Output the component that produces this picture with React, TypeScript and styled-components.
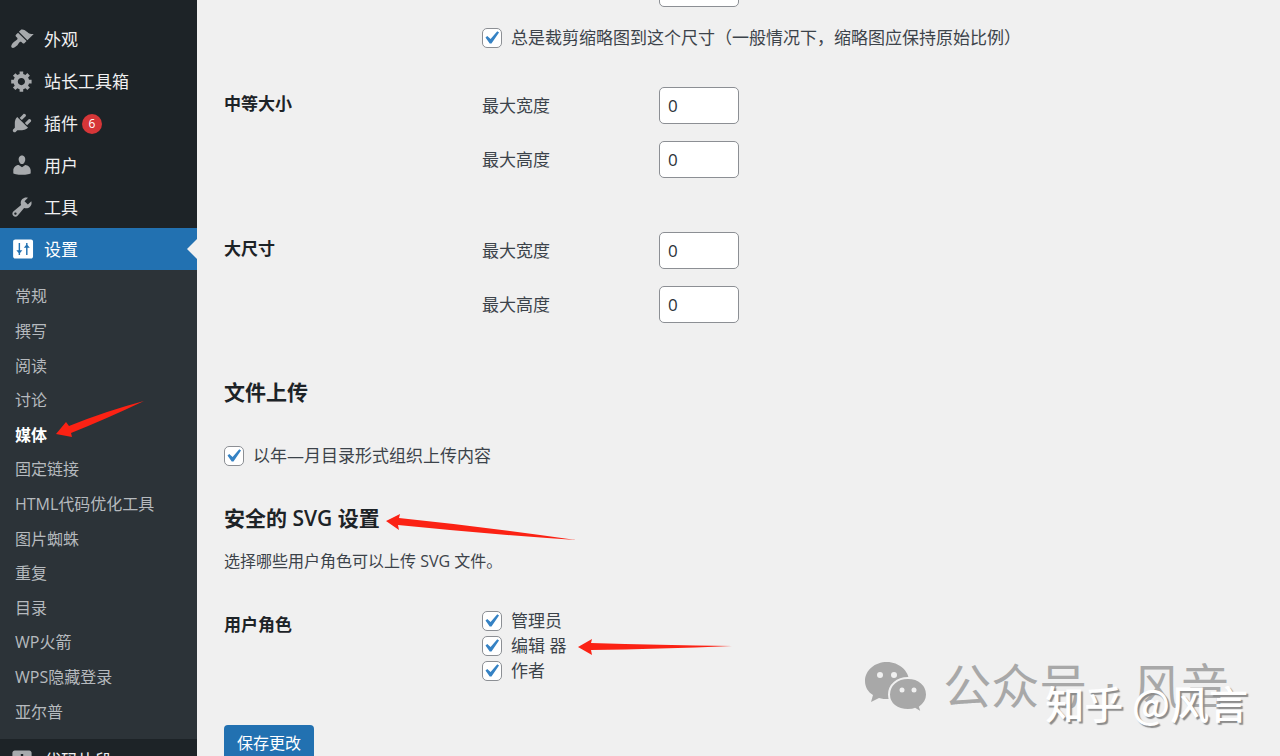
import React from "react";
import styled, { createGlobalStyle } from "styled-components";

const GlobalStyle = createGlobalStyle`
  *, *::before, *::after { box-sizing: border-box; }
  body {
    margin: 0;
    background: #f0f0f0;
    color: #3c434a;
    font-family: "Open Sans", "Noto Sans CJK SC", sans-serif;
    font-size: 17px;
    line-height: 24px;
  }
  input, button { font-family: inherit; }
`;

const Page = styled.div`
  position: relative;
  display: flex;
  height: 100vh;
  overflow: hidden;
`;

/* ---------- sidebar ---------- */

const Sidebar = styled.nav`
  flex: 0 0 197px;
  padding-top: 18px;
  background: #1d2327;
`;

const MenuList = styled.ul`
  margin: 0;
  padding: 0;
  list-style: none;
`;

const MenuLink = styled.a<{ $current?: boolean }>`
  position: relative;
  display: flex;
  align-items: center;
  gap: 10px;
  height: 42px;
  padding-left: 10px;
  color: ${(p) => (p.$current ? "#fff" : "#f0f0f1")};
  background: ${(p) => (p.$current ? "#2271b1" : "transparent")};
  text-decoration: none;
  line-height: 26px;
  white-space: nowrap;

  &::after {
    content: "";
    display: ${(p) => (p.$current ? "block" : "none")};
    position: absolute;
    right: 0;
    top: 11px;
    border: 10px solid transparent;
    border-left-width: 0;
    border-right-color: #f0f0f0;
  }
`;

const MenuIcon = styled.svg<{ $current?: boolean }>`
  flex: none;
  width: 24px;
  height: 24px;
  fill: ${(p) => (p.$current ? "#fff" : "#a7aaad")};
`;

const MenuText = styled.span`
  padding-top: 2px;
`;

const Badge = styled.span`
  width: 20px;
  height: 20px;
  margin: 2px 0 0 -6px;
  border-radius: 10px;
  background: #d63638;
  color: #fff;
  font-size: 12px;
  line-height: 20px;
  text-align: center;
`;

const SubMenu = styled.ul`
  display: grid;
  grid-auto-rows: 1fr;
  min-height: 469px;
  margin: 0;
  padding: 9px 0 10px;
  list-style: none;
  background: #2c3338;
`;

const SubItem = styled.li`
  position: relative;
  display: flex;
  align-items: center;
`;

const SubLink = styled.a<{ $current?: boolean }>`
  padding-left: 15px;
  color: ${(p) => (p.$current ? "#fff" : "#b6babe")};
  font-size: 16px;
  font-weight: ${(p) => (p.$current ? 700 : 400)};
  text-decoration: none;
  white-space: nowrap;
`;

/* ---------- settings form ---------- */

const Main = styled.main`
  flex: 1;
  min-width: 0;
  padding: 0 27px;
`;

/* The form is scrolled, so its first field is partly above the window. */
const Form = styled.form`
  margin-top: -30px;
`;

const FormRow = styled.section`
  display: grid;
  grid-template-columns: 258px 1fr;
  margin-bottom: 37px;
`;

const RowTitle = styled.h3`
  margin: 0;
  padding-top: 5px;
  color: #1d2327;
  font-size: 17px;
  font-weight: 700;
  line-height: 24px;
`;

const RowBody = styled.div`
  grid-column: 2;
`;

const Field = styled.div`
  display: grid;
  grid-template-columns: 177px 80px;
  align-items: center;
  margin-bottom: 17px;
`;

const NumberInput = styled.input`
  grid-column: 2;
  width: 80px;
  height: 37px;
  padding: 0 8px;
  border: 1px solid #8c8f94;
  border-radius: 5px;
  background: #fff;
  color: #2c3338;
  font-size: 17px;
`;

const CheckLabel = styled.label`
  position: relative;
  display: flex;
  align-items: center;
  gap: 9px;
  width: max-content;
  height: 25px;
`;

const CheckBox = styled.span`
  position: relative;
  display: block;
  width: 20px;
  height: 20px;

  input {
    display: block;
    appearance: none;
    width: 20px;
    height: 20px;
    margin: 0;
    border: 1px solid #8c8f94;
    border-radius: 5px;
    background: #fff;
  }
  svg {
    position: absolute;
    left: -4px;
    top: -3px;
    width: 26px;
    height: 26px;
    fill: #3582c4;
    pointer-events: none;
    visibility: hidden;
  }
  input:checked + svg { visibility: visible; }
`;

const CropOption = styled.div`
  padding-top: 1px;
`;

const SectionTitle = styled.h2`
  position: relative;
  width: max-content;
  margin: 35px 0 16px;
  color: #1d2327;
  font-size: 21px;
  font-weight: 700;
  line-height: 30px;
`;

const Latin = styled.span`
  font-weight: 600;
`;

const UploadOption = styled.div`
  padding-top: 20px;
`;

const Description = styled.p`
  margin: 0 0 35px;
  font-size: 16px;
`;

const SubmitButton = styled.button`
  height: 36px;
  margin-top: 5px;
  padding: 0 13px 2px;
  border: 0;
  border-radius: 4px;
  background: #2271b1;
  color: #fff;
  font-size: 16px;
`;

/* ---------- overlays ---------- */

const Arrow = styled.svg<{ $left: number; $top: number }>`
  position: absolute;
  left: ${(p) => p.$left}px;
  top: ${(p) => p.$top}px;
  z-index: 1;
  fill: #fb2214;
  pointer-events: none;
`;

const AccountMark = styled.div`
  position: absolute;
  right: 51px;
  bottom: 37px;
  display: flex;
  align-items: center;
  gap: 14px;
  color: #a8a8a8;
  font-family: "DejaVu Sans", "Noto Sans CJK SC", sans-serif;
  font-size: 48px;
  line-height: 64px;
  white-space: pre;
`;

const SiteMark = styled.div`
  position: absolute;
  right: 32px;
  bottom: 30px;
  color: #fff;
  font-family: "Noto Sans CJK SC", sans-serif;
  font-size: 39px;
  font-weight: 500;
  line-height: 48px;
  text-shadow: 2px 2px 1px #8c8c8c;
  white-space: pre;
`;

const icons = {
  brush:
    "M14.48 11.06L7.41 3.99l1.5-1.5c.5-.56 2.3-.47 3.51.32 1.21.8 1.43 1.28 2.91 2.1 1.18.64 2.45 1.26 4.45.85zm-.71.71L6.7 4.7 4.93 6.47c-.39.39-.39 1.02 0 1.41l1.06 1.06c.39.39.39 1.03 0 1.42-.6.6-1.43 1.11-2.21 1.69-.35.26-.7.53-1.01.84C1.43 14.23.4 16.08 1.4 17.07c.99 1 2.84-.03 4.18-1.36.31-.31.58-.66.85-1.02.57-.78 1.08-1.61 1.69-2.21.39-.39 1.02-.39 1.41 0l1.06 1.06c.39.39 1.02.39 1.41 0z",
  gear:
    "M18 12h-2.18c-.17.7-.44 1.35-.81 1.93l1.54 1.54-2.1 2.1-1.54-1.54c-.58.36-1.23.63-1.91.79V19H8v-2.18c-.68-.16-1.33-.43-1.91-.79l-1.54 1.54-2.12-2.12 1.54-1.54c-.36-.58-.63-1.23-.79-1.91H1V9.03h2.17c.16-.7.44-1.35.8-1.94L2.43 5.55l2.1-2.1 1.54 1.54c.58-.37 1.24-.64 1.93-.81V2h3v2.18c.68.16 1.33.43 1.91.79l1.54-1.54 2.12 2.12-1.54 1.54c.36.59.64 1.24.8 1.94H18V12zm-8.5 1.5c1.66 0 3-1.34 3-3s-1.34-3-3-3-3 1.34-3 3 1.34 3 3 3z",
  plug:
    "M13.11 4.36L9.87 7.6 8 5.73l3.24-3.24c.35-.34 1.05-.2 1.56.32.52.51.66 1.21.31 1.55zm-8 1.77l.91-1.12 9.01 9.01-1.19.84c-.71.71-2.63 1.16-3.82 1.16H6.14L4.9 17.26c-.59.59-1.54.59-2.12 0-.59-.58-.59-1.53 0-2.12l1.24-1.24v-3.88c0-1.13.4-3.19 1.09-3.89zm7.26 3.97l3.24-3.24c.34-.35 1.04-.21 1.55.31.52.51.66 1.21.31 1.55l-3.24 3.25z",
  user:
    "M10 9.25c-2.27 0-2.73-3.44-2.73-3.44C7 4.02 7.82 2 9.97 2c2.16 0 2.98 2.02 2.71 3.81 0 0-.41 3.44-2.68 3.44zm0 2.57L12.72 10c2.39 0 4.52 2.33 4.52 4.53v2.49s-3.65 1.13-7.24 1.13c-3.65 0-7.24-1.13-7.24-1.13v-2.49c0-2.25 1.94-4.48 4.47-4.48z",
  wrench:
    "M16.68 9.77c-1.34 1.34-3.3 1.67-4.95.99l-5.41 6.52c-.99.99-2.59.99-3.58 0s-.99-2.59 0-3.57l6.52-5.42c-.68-1.65-.35-3.61.99-4.95 1.28-1.28 3.12-1.62 4.72-1.06l-2.89 2.89 2.82 2.82 2.86-2.87c.53 1.58.18 3.39-1.08 4.65zM3.81 16.21c.4.39 1.04.39 1.43 0 .4-.4.4-1.04 0-1.43-.39-.4-1.03-.4-1.43 0-.39.39-.39 1.03 0 1.43z",
  sliders:
    "M17.500 2h-13C3.400 2 2.600 2.700 2.600 3.700v12.600c0 1 .8 1.700 1.900 1.700h13c1 0 1.700-.7 1.700-1.700V3.700c0-1-.7-1.700-1.700-1.700zM7.200 5h1.200v6h1.900L8.400 13.300V15H7.200v-1.700L5.300 11h1.900zM14.600 15h-1.200V9h-1.900l1.900-2.300V5h1.200v1.700L16.500 9h-1.900z",
  snippet:
    "M4 2h12c1.100 0 2 .9 2 2v12c0 1.100-.9 2-2 2H4c-1.100 0-2-.9-2-2V4c0-1.100.9-2 2-2zM9 5v4H5v2h4v4h2v-4h4V9h-4V5z",
};

const mainItems: { label: string; icon: keyof typeof icons; count?: number }[] = [
  { label: "外观", icon: "brush" },
  { label: "站长工具箱", icon: "gear" },
  { label: "插件", icon: "plug", count: 6 },
  { label: "用户", icon: "user" },
  { label: "工具", icon: "wrench" },
];

const subItems = [
  "常规", "撰写", "阅读", "讨论", "媒体", "固定链接", "HTML代码优化工具",
  "图片蜘蛛", "重复", "目录", "WP火箭", "WPS隐藏登录", "亚尔普",
];

type MenuEntryProps = { label: string; icon: keyof typeof icons; count?: number; current?: boolean };

function MenuEntry({ label, icon, count, current }: MenuEntryProps) {
  return (
    <MenuLink href="#" $current={current} aria-current={current ? "true" : undefined}>
      <MenuIcon viewBox="0 0 20 20" $current={current} aria-hidden="true">
        <path fillRule="evenodd" d={icons[icon]} />
      </MenuIcon>
      <MenuText>{label}</MenuText>
      {count !== undefined && <Badge>{count}</Badge>}
    </MenuLink>
  );
}

function Check({ label, children }: { label: string; children?: React.ReactNode }) {
  return (
    <CheckLabel>
      <CheckBox>
        <input type="checkbox" defaultChecked />
        <svg viewBox="0 0 20 20" aria-hidden="true">
          <path d="M14.83 4.89l1.34.94-5.81 8.38H9.02L5.78 9.67l1.34-1.25 2.57 2.4z" />
        </svg>
      </CheckBox>
      <span>{label}</span>
      {children}
    </CheckLabel>
  );
}

function SizeRow({ id, title }: { id: string; title: string }) {
  return (
    <FormRow>
      <RowTitle>{title}</RowTitle>
      <RowBody>
        <Field>
          <label htmlFor={`${id}-w`}>最大宽度</label>
          <NumberInput id={`${id}-w`} type="text" inputMode="numeric" defaultValue="0" />
        </Field>
        <Field>
          <label htmlFor={`${id}-h`}>最大高度</label>
          <NumberInput id={`${id}-h`} type="text" inputMode="numeric" defaultValue="0" />
        </Field>
      </RowBody>
    </FormRow>
  );
}

export default function App() {
  return (
    <Page>
      <GlobalStyle />
      <Sidebar>
        <MenuList>
          {mainItems.map((item) => (
            <li key={item.label}>
              <MenuEntry {...item} />
            </li>
          ))}
          <li>
            <MenuEntry label="设置" icon="sliders" current />
            <SubMenu>
              {subItems.map((label) => (
                <SubItem key={label}>
                  <SubLink href="#" $current={label === "媒体"}>{label}</SubLink>
                  {label === "媒体" && (
                    <Arrow $left={56} $top={-17} width="90" height="40" viewBox="0 0 90 40" aria-hidden="true">
                      <path d="M0 34L10 22L13 26Q50 11 88 1Q50 19 15 33L16 37Z" />
                    </Arrow>
                  )}
                </SubItem>
              ))}
            </SubMenu>
          </li>
          <li>
            <MenuEntry label="代码片段" icon="snippet" />
          </li>
        </MenuList>
      </Sidebar>

      <Main>
        <Form onSubmit={(e) => e.preventDefault()}>
          <FormRow>
            <RowBody>
              <Field>
                <NumberInput type="text" aria-label="缩略图高度" />
              </Field>
              <CropOption>
                <Check label="总是裁剪缩略图到这个尺寸（一般情况下，缩略图应保持原始比例）" />
              </CropOption>
            </RowBody>
          </FormRow>
          <SizeRow id="medium" title="中等大小" />
          <SizeRow id="large" title="大尺寸" />

          <SectionTitle>文件上传</SectionTitle>
          <UploadOption>
            <Check label="以年—月目录形式组织上传内容" />
          </UploadOption>

          <SectionTitle>
            安全的 <Latin>SVG</Latin> 设置
            <Arrow $left={162} $top={10} width="192" height="30" viewBox="0 0 192 30" aria-hidden="true">
              <path d="M0 8L14 1L13 5Q100 14 190 27Q100 21 12 12L13 17Z" />
            </Arrow>
          </SectionTitle>
          <Description>选择哪些用户角色可以上传 SVG 文件。</Description>

          <FormRow>
            <RowTitle>用户角色</RowTitle>
            <RowBody>
              <Check label="管理员" />
              <Check label="编辑 器">
                <Arrow $left={96} $top={4} width="156" height="20" viewBox="0 0 156 20" aria-hidden="true">
                  <path d="M0 10L14 2L13 6Q80 8 154 9Q80 12 13 13L14 18Z" />
                </Arrow>
              </Check>
              <Check label="作者" />
            </RowBody>
          </FormRow>
          <SubmitButton type="submit">保存更改</SubmitButton>
        </Form>
      </Main>

      <AccountMark>
        <svg width="64" height="54" viewBox="0 0 64 54" aria-hidden="true">
          <g fill="#a8a8a8">
            <path d="M22 2C10 2 0 10 0 21c0 6 3 11 8 14l-2 7 8-4c3 1 6 1 9 1 12 0 21-8 21-18S34 2 22 2z" />
            <path stroke="#f0f0f0" strokeWidth="2" d="M43 18c-11 0-19 7-19 16.500S32 50 43 50c2 0 5 0 7-1l7 4-2-6c4-3 7-7 7-12.500C62 25 54 18 43 18z" />
          </g>
          <g fill="#f0f0f0">
            <circle cx="15" cy="15" r="3" />
            <circle cx="29" cy="15" r="3" />
            <circle cx="37" cy="30" r="2.500" />
            <circle cx="49" cy="30" r="2.500" />
          </g>
        </svg>
        <span>公众号 · 风音</span>
      </AccountMark>
      <SiteMark>知乎 @风言</SiteMark>
    </Page>
  );
}
